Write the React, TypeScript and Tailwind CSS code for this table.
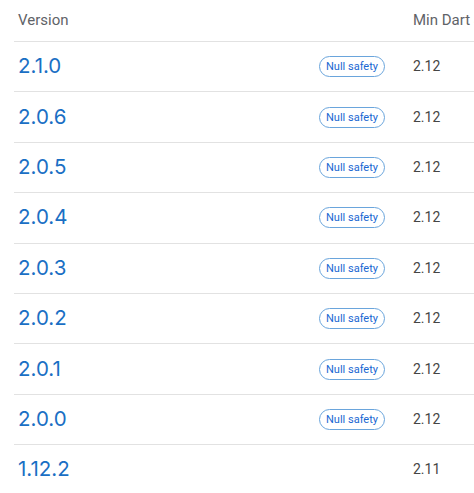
const versions: { v: string; nullSafe: boolean; dart: string }[] = [
  { v: "2.1.0", nullSafe: true, dart: "2.12" },
  { v: "2.0.6", nullSafe: true, dart: "2.12" },
  { v: "2.0.5", nullSafe: true, dart: "2.12" },
  { v: "2.0.4", nullSafe: true, dart: "2.12" },
  { v: "2.0.3", nullSafe: true, dart: "2.12" },
  { v: "2.0.2", nullSafe: true, dart: "2.12" },
  { v: "2.0.1", nullSafe: true, dart: "2.12" },
  { v: "2.0.0", nullSafe: true, dart: "2.12" },
  { v: "1.12.2", nullSafe: false, dart: "2.11" },
];

function NullSafetyBadge() {
  return (
    <span className="inline-flex h-[21px] items-center rounded-full border border-[#6aa5dc] px-[6px] text-[11px] leading-none text-[#1967d2]">
      Null safety
    </span>
  );
}

export default function App() {
  return (
    <div className="h-[493px] w-[474px] overflow-hidden bg-white font-['Roboto',sans-serif]">
      <div className="ml-[14px] w-[560px]">
        <div className="grid h-[41px] grid-cols-[290px_85px_1fr] items-center text-[15px] text-[#5f6368]">
          <div className="pl-[4px]">Version</div>
          <div />
          <div className="whitespace-nowrap pl-[24px]">Min Dart SDK</div>
        </div>
        {versions.map((row) => (
          <div
            key={row.v}
            className="grid h-[50.4px] grid-cols-[290px_85px_1fr] items-center border-t-[1.5px] border-[#e2e2e2]"
          >
            <div className="pl-[4px]">
              <a className="font-['Inter',sans-serif] text-[20.5px] text-[#1a6fc4]">{row.v}</a>
            </div>
            <div className="flex justify-end pr-[4px]">
              {row.nullSafe && <NullSafetyBadge />}
            </div>
            <div className="pl-[24px] text-[14px] text-[#454545]">{row.dart}</div>
          </div>
        ))}
      </div>
    </div>
  );
}
